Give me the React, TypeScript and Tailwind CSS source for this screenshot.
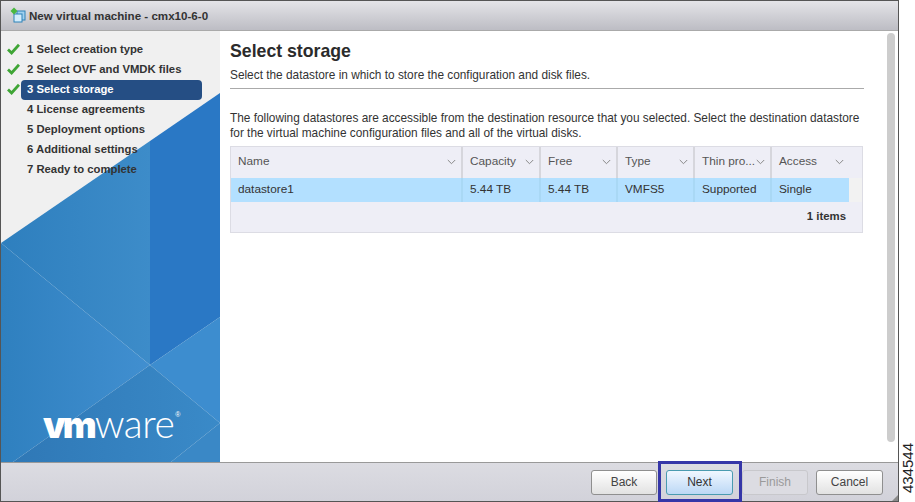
const font = "[font-family:'Liberation_Sans',Arial,sans-serif]";

function Check() {
  return (
    <svg width="13" height="12" viewBox="0 0 13 12" className="absolute left-[-14px] top-[3px]">
      <path d="M1 6.5 L4.6 10 L12 1.8" fill="none" stroke="#3fa535" strokeWidth="2.8" />
    </svg>
  );
}

function Chevron() {
  return (
    <svg width="9" height="6" viewBox="0 0 9 6" className="shrink-0">
      <path d="M0.8 1 L4.5 4.7 L8.2 1" fill="none" stroke="#888" strokeWidth="1" />
    </svg>
  );
}

function Backdrop() {
  return (
    <svg viewBox="0 0 219 431" className="absolute inset-0 w-[219px] h-[431px]" preserveAspectRatio="none">
      <defs>
        <linearGradient id="a" x1="0" y1="0" x2="1" y2="0">
          <stop offset="0" stopColor="#2e7fbe" />
          <stop offset="1" stopColor="#3d8cc9" />
        </linearGradient>
        <linearGradient id="b" x1="0" y1="0" x2="1" y2="0">
          <stop offset="0" stopColor="#2f80bf" />
          <stop offset="1" stopColor="#418fd0" />
        </linearGradient>
        <linearGradient id="c" x1="0" y1="0" x2="1" y2="0">
          <stop offset="0" stopColor="#2f78b6" />
          <stop offset="1" stopColor="#3a8ac8" />
        </linearGradient>
      </defs>
      <path d="M0 212 L149 110 L149 334 Z" fill="url(#a)" />
      <path d="M149 110 L219 62 L219 286 L149 334 Z" fill="#2a78c5" />
      <path d="M0 212 L149 334 L12 431 L0 431 Z" fill="url(#b)" />
      <path d="M149 334 L219 286 L219 392 Z" fill="#3d8dcf" />
      <path d="M149 334 L219 392 L170 431 L12 431 Z" fill="url(#c)" />
      <path d="M219 392 L219 431 L170 431 Z" fill="#3a88c6" />
    </svg>
  );
}

const steps = [
  "1 Select creation type",
  "2 Select OVF and VMDK files",
  "3 Select storage",
  "4 License agreements",
  "5 Deployment options",
  "6 Additional settings",
  "7 Ready to complete",
];

const cols = [
  { name: "Name", w: "w-[232px]", val: "datastore1" },
  { name: "Capacity", w: "w-[78px]", val: "5.44 TB" },
  { name: "Free", w: "w-[77px]", val: "5.44 TB" },
  { name: "Type", w: "w-[77px]", val: "VMFS5" },
  { name: "Thin pro...", w: "w-[77px]", val: "Supported" },
  { name: "Access", w: "w-[77px]", val: "Single" },
];

function Btn({ label, primary, disabled, extra }: { label: string; primary?: boolean; disabled?: boolean; extra: string }) {
  const cls = primary
    ? "border-[#4a9bb0] bg-gradient-to-b from-[#f0f7ff] to-[#bcd8f5] text-[#333]"
    : disabled
      ? "border-[#c8c8cc] bg-[#dcdce2] text-[#9a9a9a]"
      : "border-[#8f8f8f] bg-gradient-to-b from-white to-[#e2e2e2] text-[#444]";
  return (
    <div className={`h-[25px] rounded-[3px] border flex items-center justify-center text-[12px] ${extra} ${cls}`}>
      {label}
    </div>
  );
}

export default function App() {
  return (
    <div className={`w-[915px] h-[502px] flex bg-white overflow-hidden ${font}`}>
      <div className="w-[899px] h-[502px] border-x border-b border-t border-[#555] flex flex-col">
        <div className="h-[30px] flex items-center pl-[9px] gap-[2px] bg-gradient-to-b from-[#e4e4e8] to-[#bdbdc4] border-b border-[#aaa] shrink-0">
          <svg width="17" height="17" viewBox="0 0 17 17">
            <rect x="7" y="4" width="8" height="9" fill="#9fd0ef" stroke="#2c82b8" />
            <rect x="4" y="7" width="8" height="8" fill="#d3ecfb" stroke="#2c82b8" />
            <path d="M4 0.5 L7.5 4 L4 7.5 L0.5 4 Z" fill="#49b83f" />
          </svg>
          <span className="text-[11.6px] font-bold text-[#333] leading-none">New virtual machine - cmx10-6-0</span>
        </div>
        <div className="flex flex-1 min-h-0">
          <div className="relative w-[219px] bg-[#f0f0f0] shrink-0 overflow-hidden">
            <Backdrop />
            <div className="relative flex flex-col pt-[9px] pl-[20px] w-[201px]">
              {steps.map((s, i) => (
                <div
                  key={s}
                  className={`relative h-[20px] pl-[6px] pb-[1px] flex items-center text-[11.3px] font-bold rounded-[4px] ${
                    i === 2 ? "bg-[#254e84] text-white" : "text-[#333]"
                  }`}
                >
                  {i < 3 && <Check />}
                  {s}
                </div>
              ))}
            </div>
            <div className="absolute left-[42px] top-[373px] flex items-baseline text-white leading-none">
              <span className="[font-family:'Inter',sans-serif] font-black text-[36px] tracking-[-3px]">vm</span>
              <span className="[font-family:'Lato',sans-serif] font-light text-[39px] tracking-[-0.5px] ml-[1px]">ware</span>
              <span className="text-[7px] self-start mt-[7px] ml-[1px]">®</span>
            </div>
          </div>
          <div className="flex-1 flex bg-white min-w-0">
            <div className="flex-1 pl-[10px] pr-[23px] pt-[10px] min-w-0">
              <h1 className="text-[17.7px] leading-[20px] font-bold text-[#2b2b2b]">Select storage</h1>
              <p className="mt-[7px] text-[11.85px] leading-[15px] text-[#333]">
                Select the datastore in which to store the configuration and disk files.
              </p>
              <div className="mt-[5px] h-px bg-[#aaa]" />
              <p className="mt-[22px] text-[11.85px] leading-[15px] text-[#333] whitespace-nowrap">
                The following datastores are accessible from the destination resource that you selected. Select the destination datastore
                <br />
                for the virtual machine configuration files and all of the virtual disks.
              </p>
              <div className="mt-[5px] w-[633px] border border-[#dcdce4] bg-[#eeeef6] text-[11.8px] text-[#555]">
                <div className="flex h-[31px]">
                  {cols.map((c, i) => (
                    <div key={c.name} className={`${c.w} flex items-center justify-between pl-[7px] pr-[5px] pb-[1px] ${i < 5 ? "border-r-2 border-[#d6d6dc]" : ""}`}>
                      <span className="whitespace-nowrap">{c.name}</span>
                      <Chevron />
                    </div>
                  ))}
                  <div className="flex-1" />
                </div>
                <div className="flex h-[24px] bg-[#f2f2f2] text-[#333]">
                  {cols.map((c, i) => (
                    <div key={c.name} className={`${c.w} flex items-center pl-[7px] bg-[#b3e0ff] ${i < 5 ? "border-r-2 border-[#a9d8f5]" : ""}`}>
                      {c.val}
                    </div>
                  ))}
                </div>
                <div className="h-[30px] flex items-center justify-end pr-[16px] font-bold text-[11.4px] text-[#333]">1 items</div>
              </div>
            </div>
            <div className="w-[11px] shrink-0 pt-[2px]">
              <div className="w-[8px] h-[409px] rounded-[4px] bg-[#cdcdcd]" />
            </div>
          </div>
        </div>
        <div className="relative h-[39px] shrink-0 border-t border-[#999] bg-gradient-to-b from-[#dcdce2] to-[#d2d2da] flex items-center justify-end pr-[15px] gap-[9px]">
          <Btn label="Back" extra="w-[66px]" />
          <Btn label="Next" primary extra="w-[67px]" />
          <Btn label="Finish" disabled extra="w-[66px]" />
          <Btn label="Cancel" extra="w-[67px] ml-[-1px]" />
          <div className="absolute left-[657px] top-[-2px] w-[84px] h-[41px] border-[3px] border-[#3536a8]" />
          <svg width="6" height="6" viewBox="0 0 6 6" className="absolute right-[0px] bottom-[0px]">
            <path d="M0 6 L6 0 L6 6 Z" fill="#8a8a8a" />
          </svg>
        </div>
      </div>
      <div className="flex-1 flex items-end justify-center pb-[9px]">
        <span className="[writing-mode:vertical-rl] rotate-180 text-[15px] leading-none text-[#222]">434544</span>
      </div>
    </div>
  );
}
